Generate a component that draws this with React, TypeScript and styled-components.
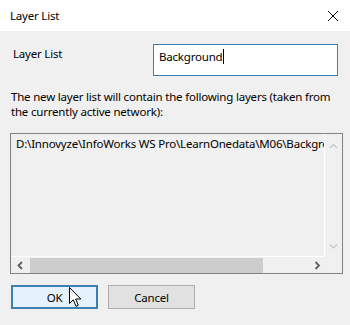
import React from "react";
import styled, { createGlobalStyle } from "styled-components";

const GlobalStyle = createGlobalStyle`
  html, body {
    margin: 0;
    padding: 0;
    width: 350px;
    height: 325px;
    overflow: hidden;
    background: #f0f0f0;
  }
  * {
    box-sizing: border-box;
  }
`;

const Window = styled.div`
  width: 350px;
  height: 325px;
  display: flex;
  flex-direction: column;
  font-family: "Noto Sans", "Open Sans", sans-serif;
  font-size: 11.5px;
  letter-spacing: -0.2px;
  color: #000;
`;

const TitleBar = styled.div`
  height: 31px;
  background: #fff;
  display: flex;
  align-items: center;
  justify-content: space-between;
  padding: 0 11px 0 10px;
  .title {
    margin: 0;
  }
`;

const Body = styled.div`
  flex: 1;
  background: #f0f0f0;
  padding: 13px 7px 0 10px;
  display: flex;
  flex-direction: column;
`;

const FieldRow = styled.div`
  display: grid;
  grid-template-columns: 143px 185px;
  align-items: start;
  label {
    padding: 2px 0 0 3px;
  }
`;

const TextBox = styled.div`
  height: 32px;
  border: 1px solid #3c7fb1;
  background: #fff;
  padding: 4px 5px;
  .caret {
    display: inline-block;
    width: 1px;
    height: 15px;
    background: #000;
    vertical-align: -3px;
    margin-left: 1px;
  }
`;

const Description = styled.p`
  margin: 13px 0 0 1px;
  line-height: 15px;
  width: 332px;
`;

const ListBox = styled.div`
  margin-top: 14px;
  width: 333px;
  height: 141px;
  border: 1px solid #828282;
  display: grid;
  grid-template-columns: 1fr 17px;
  grid-template-rows: 1fr 16px;
`;

const ListContent = styled.div`
  border-right: 1px solid #fff;
  border-bottom: 1px solid #fff;
  padding: 2px 0 0 5px;
  overflow: hidden;
  white-space: nowrap;
`;

const VScroll = styled.div`
  display: flex;
  flex-direction: column;
  justify-content: space-between;
  align-items: center;
  padding: 8px 0 6px;
`;

const HScroll = styled.div`
  display: flex;
  align-items: center;
  padding: 0 3px 0 5px;
  gap: 5px;
`;

const Thumb = styled.div<{ $width: number }>`
  height: 15px;
  width: ${(p) => p.$width}px;
  background: #cdcdcd;
`;

const Track = styled.div`
  flex: 1;
`;

const ButtonRow = styled.div`
  margin-top: 11px;
  display: flex;
  gap: 10px;
  padding-left: 1px;
  position: relative;
`;

const Button = styled.button<{ $default?: boolean }>`
  width: 87px;
  height: 24px;
  font-family: inherit;
  font-size: inherit;
  letter-spacing: inherit;
  color: #000;
  padding: 0;
  background: ${(p) => (p.$default ? "#e5f1fb" : "#e1e1e1")};
  border: ${(p) => (p.$default ? "2px solid #3c7fb1" : "1px solid #adadad")};
`;

const Cursor = styled.svg`
  position: absolute;
  left: 59px;
  top: 2px;
`;

const Chevron = ({ dir, color, bold }: { dir: "up" | "down" | "left" | "right"; color: string; bold?: boolean }) => {
  const paths = {
    up: "M1 6 L4.5 2.5 L8 6",
    down: "M1 2.5 L4.5 6 L8 2.5",
    left: "M6 1 L2.5 4.5 L6 8",
    right: "M2.5 1 L6 4.5 L2.5 8",
  };
  return (
    <svg width="9" height="9" viewBox="0 0 9 9">
      <path d={paths[dir]} fill="none" stroke={color} strokeWidth={bold ? 1.8 : 1.1} />
    </svg>
  );
};

const App: React.FC = () => {
  return (
    <Window>
      <GlobalStyle />
      <TitleBar>
        <p className="title">Layer List</p>
        <svg width="12" height="12" viewBox="0 0 12 12">
          <path d="M1 1 L11 11 M11 1 L1 11" stroke="#111" strokeWidth="1" />
        </svg>
      </TitleBar>
      <Body>
        <FieldRow>
          <label>Layer List</label>
          <TextBox>
            Background<span className="caret" />
          </TextBox>
        </FieldRow>
        <Description>
          The new layer list will contain the following layers (taken from the
          currently active network):
        </Description>
        <ListBox>
          <ListContent>D:\Innovyze\InfoWorks WS Pro\LearnOnedata\M06\Background</ListContent>
          <VScroll>
            <Chevron dir="up" color="#c2c2c2" />
            <Chevron dir="down" color="#c2c2c2" />
          </VScroll>
          <HScroll>
            <Chevron dir="left" color="#606060" bold />
            <Thumb $width={233} />
            <Track />
            <Chevron dir="right" color="#606060" bold />
          </HScroll>
          <div />
        </ListBox>
        <ButtonRow>
          <Button $default>OK</Button>
          <Button>Cancel</Button>
          <Cursor width="13" height="21" viewBox="0 0 13 21">
            <path
              d="M0.5 0.5 L0.5 16.5 L4.3 12.8 L7 19.3 L9.3 18.3 L6.7 12 L11.8 12 Z"
              fill="#fff"
              stroke="#000"
              strokeWidth="1"
              strokeLinejoin="miter"
            />
          </Cursor>
        </ButtonRow>
      </Body>
    </Window>
  );
};

export default App;
